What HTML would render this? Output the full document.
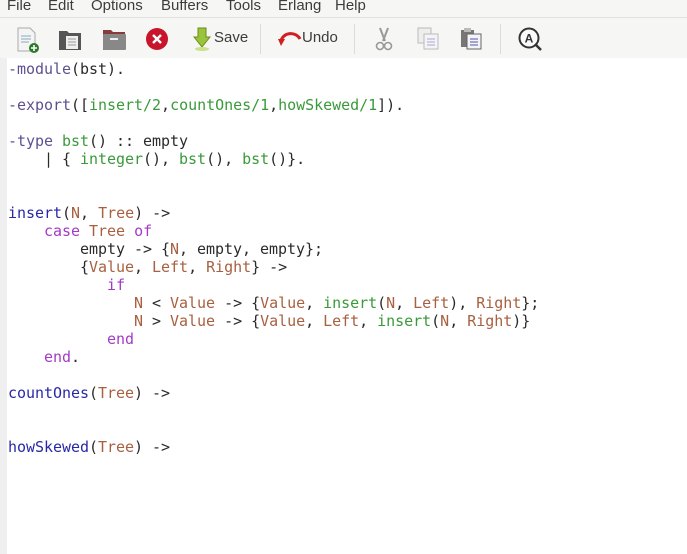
<!DOCTYPE html>
<html><head><meta charset="utf-8"><style>
*{margin:0;padding:0;box-sizing:border-box}
body{width:687px;height:554px;overflow:hidden;background:#fff;font-family:"Liberation Sans","DejaVu Sans",sans-serif;position:relative}
#menu{position:absolute;top:0;left:0;width:687px;height:18px;background:#f6f6f5;border-bottom:1px solid #e0e0e0;font-size:15px;color:#3c3c3c}
#menu span{position:absolute;top:-3px}
#tb{position:absolute;top:18px;left:0;width:687px;height:40px;background:#f6f6f5}
.ic{position:absolute;top:9px}
.sep{position:absolute;top:6px;width:1px;height:30px;background:#dcdcdc}
.lbl{position:absolute;top:11px;font-size:15px;color:#3c3c3c}
#gut{position:absolute;top:58px;left:0;width:7px;height:496px;background:#efefef}
#code{position:absolute;top:60px;left:8px;font-family:"DejaVu Sans Mono","Liberation Mono",monospace;font-size:15px;line-height:18px;white-space:pre;color:#2a2a2a;letter-spacing:-0.03px}
.a{color:#5e5090}.g{color:#3a9a3a}.k{color:#a43ac8}.v{color:#a86040}.f{color:#2828a8}
</style></head><body>
<div id="menu"><span style="left:7px">File</span><span style="left:48px">Edit</span><span style="left:91px">Options</span><span style="left:161px">Buffers</span><span style="left:226px">Tools</span><span style="left:278px">Erlang</span><span style="left:335px">Help</span></div>
<div id="tb">
<svg class="ic" style="left:15px" width="24" height="26"><path d="M3 1h12l5 5v18H3z" fill="#f4f4f4" stroke="#aaa"/><path d="M6 9h10M6 12h10M6 15h8" stroke="#8ab"/><circle cx="19" cy="21" r="5" fill="#2a7a2a"/><path d="M16 21h6M19 18v6" stroke="#fff" stroke-width="1.6"/></svg>
<svg class="ic" style="left:58px" width="24" height="24"><path d="M1 4h8l2 2h12v17H1z" fill="#555"/><rect x="8" y="9" width="12" height="13" fill="#eee"/><path d="M10 12h8M10 15h8M10 18h8" stroke="#999"/></svg>
<svg class="ic" style="left:102px" width="24" height="24"><path d="M1 3h8l2 2h12v18H1z" fill="#8b3a3a"/><rect x="1" y="7" width="23" height="16" rx="1" fill="#888"/><rect x="8" y="11" width="8" height="2" fill="#eee"/></svg>
<svg class="ic" style="left:146px" width="24" height="24"><circle cx="11" cy="12" r="11" fill="#c7162b"/><path d="M7 8l8 8M15 8l-8 8" stroke="#fff" stroke-width="2.4"/></svg>
<svg class="ic" style="left:193px" width="18" height="24"><path d="M5 1h8v9h4l-8 10-8-10h4z" fill="#9ac43a" stroke="#6a8a20"/><ellipse cx="9" cy="22" rx="7" ry="2" fill="#cde08a"/></svg>
<span class="lbl" style="left:214px">Save</span>
<div class="sep" style="left:260px"></div>
<svg class="ic" style="left:278px" width="26" height="24"><path d="M3 14a10 9 0 0 1 19-2" fill="none" stroke="#d02020" stroke-width="3"/><path d="M0 12l7 0-4 7z" fill="#d02020"/></svg>
<span class="lbl" style="left:302px">Undo</span>
<div class="sep" style="left:354px"></div>
<svg class="ic" style="left:373px" width="22" height="24"><path d="M7 1l5 13M15 1l-5 13" stroke="#999" stroke-width="2"/><circle cx="7" cy="19" r="3.5" fill="none" stroke="#999" stroke-width="1.6"/><circle cx="15" cy="19" r="3.5" fill="none" stroke="#999" stroke-width="1.6"/></svg>
<svg class="ic" style="left:417px" width="24" height="24"><rect x="1" y="1" width="13" height="15" fill="#eee" stroke="#bbb"/><rect x="7" y="7" width="14" height="15" fill="#f4f4f8" stroke="#bbb"/><path d="M10 12h8M10 15h8M10 18h8" stroke="#aac"/></svg>
<svg class="ic" style="left:460px" width="24" height="24"><rect x="1" y="3" width="13" height="17" fill="#777"/><rect x="4" y="1" width="7" height="4" fill="#bbb"/><rect x="7" y="7" width="14" height="15" fill="#f4f4f8" stroke="#666"/><path d="M10 12h8M10 15h8M10 18h8" stroke="#55a"/></svg>
<div class="sep" style="left:500px"></div>
<svg class="ic" style="left:518px" width="26" height="26"><circle cx="11" cy="11" r="9.5" fill="#fafafa" stroke="#333" stroke-width="2"/><path d="M17 17l6 6" stroke="#333" stroke-width="2.5"/><text x="11" y="15.5" font-size="12" font-weight="bold" text-anchor="middle" fill="#333" font-family="Liberation Sans">A</text></svg>
</div>
<div id="gut"></div>
<div id="code"><span class="a">-module</span>(bst).

<span class="a">-export</span>([<span class="g">insert/2</span>,<span class="g">countOnes/1</span>,<span class="g">howSkewed/1</span>]).

<span class="a">-type</span> <span class="g">bst</span>() :: empty
    | { <span class="g">integer</span>(), <span class="g">bst</span>(), <span class="g">bst</span>()}.


<span class="f">insert</span>(<span class="v">N</span>, <span class="v">Tree</span>) -&gt;
    <span class="k">case</span> <span class="v">Tree</span> <span class="k">of</span>
        empty -&gt; {<span class="v">N</span>, empty, empty};
        {<span class="v">Value</span>, <span class="v">Left</span>, <span class="v">Right</span>} -&gt;
           <span class="k">if</span>
              <span class="v">N</span> &lt; <span class="v">Value</span> -&gt; {<span class="v">Value</span>, <span class="g">insert</span>(<span class="v">N</span>, <span class="v">Left</span>), <span class="v">Right</span>};
              <span class="v">N</span> &gt; <span class="v">Value</span> -&gt; {<span class="v">Value</span>, <span class="v">Left</span>, <span class="g">insert</span>(<span class="v">N</span>, <span class="v">Right</span>)}
           <span class="k">end</span>
    <span class="k">end</span>.

<span class="f">countOnes</span>(<span class="v">Tree</span>) -&gt;


<span class="f">howSkewed</span>(<span class="v">Tree</span>) -&gt;
</div>
</body></html>
